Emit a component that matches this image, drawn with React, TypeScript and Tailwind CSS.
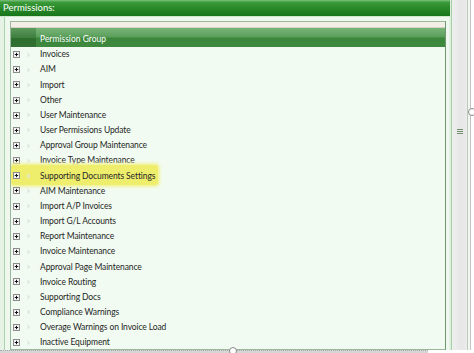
import React from "react";

const rows = [
  "Invoices",
  "AIM",
  "Import",
  "Other",
  "User Maintenance",
  "User Permissions Update",
  "Approval Group Maintenance",
  "Invoice Type Maintenance",
  "Supporting Documents Settings",
  "AIM Maintenance",
  "Import A/P Invoices",
  "Import G/L Accounts",
  "Report Maintenance",
  "Invoice Maintenance",
  "Approval Page Maintenance",
  "Invoice Routing",
  "Supporting Docs",
  "Compliance Warnings",
  "Overage Warnings on Invoice Load",
  "Inactive Equipment",
];

function PlusBox() {
  return (
    <svg width="7" height="7" viewBox="0 0 7 7" className="block">
      <rect x="0.5" y="0.5" width="6" height="6" fill="#f4f4f4" stroke="#8c8c8c" strokeWidth="1" />
      <path d="M1.8 3.5 H5.2 M3.5 1.8 V5.2" stroke="#111" strokeWidth="1" />
    </svg>
  );
}

function Arrow() {
  return (
    <svg width="4" height="6" viewBox="0 0 4 6" className="block">
      <path d="M0.5 0.5 L3.5 3 L0.5 5.5 Z" fill="#dfe8df" />
    </svg>
  );
}

export default function App() {
  return (
    <div className="relative w-[474px] h-[353px] overflow-hidden bg-white font-['Lato',sans-serif]">
      <div className="flex h-[350px]">
        {/* left: panel */}
        <div className="flex flex-col w-[450px] min-h-0">
          <div className="shrink-0 h-[16px] flex items-center pl-[3px] text-white text-[9.5px] leading-none bg-[linear-gradient(to_bottom,#7cc07c_0%,#3a9a3a_15%,#2a8a2a_50%,#17761a_100%)]">
            Permissions:
          </div>
          <div className="flex-1 min-h-0 flex bg-[#eef8ee] border-t border-[#cfe6cf]">
            <div className="w-[4px] bg-[#e6f3e6]" />
            <div className="flex-1 min-h-0 flex flex-col border-l border-[#a9d3a9] pl-[5px] pt-[4px]">
              <div className="w-[436px] flex-1 min-h-0 flex flex-col border border-[#9cb89c] border-r-[#6f976f] bg-[#f1fbf1] overflow-hidden">
                <div className="shrink-0 h-[6px] bg-[#f3eee6] border-b border-[#d8d2c6]" />
                <div className="shrink-0 h-[19px] flex text-white text-[8.5px] leading-none">
                  <div className="w-[25px] bg-[linear-gradient(to_bottom,#5e995e_0%,#3f7f3f_50%,#2c6e2c_52%,#336f33_100%)]" />
                  <div className="flex-1 flex items-center pl-[4px] pt-[3px] bg-[linear-gradient(to_bottom,#78b478_0%,#5a9e5a_48%,#3a863a_52%,#3f8a3f_100%)]">
                    Permission Group
                  </div>
                </div>
                <div className="shrink-0 flex flex-col">
                  {rows.map((r, i) => (
                    <div key={r} className="relative shrink-0 h-[15.16px] flex items-center text-[8.5px] leading-none text-[#262626] tracking-[-0.1px]">
                      {i === 8 && (
                        <div className="absolute left-0 top-[-3px] bottom-[-2px] w-[147px] rounded-[3px] bg-[#efee6c] shadow-[0_0_3px_2px_#f2f29a]" />
                      )}
                      <div className="relative w-[29px] flex items-center pl-[2px]">
                        <PlusBox />
                        <div className="ml-[7px]">
                          <Arrow />
                        </div>
                      </div>
                      <div className="relative">{r}</div>
                    </div>
                  ))}
                </div>
              </div>
            </div>
            <div className="w-[1px] bg-[#e3f2e3]" />
          </div>
        </div>
        {/* right strips */}
        <div className="flex w-[24px]">
          <div className="w-[1px] bg-[#dcefdc]" />
          <div className="w-[1px] bg-[#a8cda8]" />
          <div className="w-[1px] bg-[#e8f3e8]" />
          <div className="w-[14px] flex flex-col items-center bg-[linear-gradient(to_right,#eeeeee,#e6e6e6_60%,#ececec)]">
            <div className="mt-[129px] flex flex-col gap-[1px]">
              <div className="w-[6px] h-[1px] bg-[#6f8f6f]" />
              <div className="w-[6px] h-[1px] bg-[#6f8f6f]" />
              <div className="w-[6px] h-[1px] bg-[#6f8f6f]" />
            </div>
          </div>
          <div className="w-[1px] bg-[#b9cdb9]" />
          <div className="w-[2px] bg-[#f3f6f3]" />
          <div className="w-[1px] bg-[#c4c4c4]" />
          <div className="flex-1 bg-white" />
        </div>
      </div>
      <div className="flex h-[3px]">
        <div className="w-[428px] bg-[#d6d6d6] border-t border-dotted border-[#a8a8a8]" />
        <div className="flex-1 bg-white" />
      </div>
      {/* resize handles */}
      <div className="absolute left-[229px] top-[347px] w-[8px] h-[8px] rounded-full bg-white border border-[#8a8a8a]" />
      <div className="absolute left-[468px] top-[108px] w-[8px] h-[8px] rounded-full bg-white border border-[#8a8a8a]" />
    </div>
  );
}
